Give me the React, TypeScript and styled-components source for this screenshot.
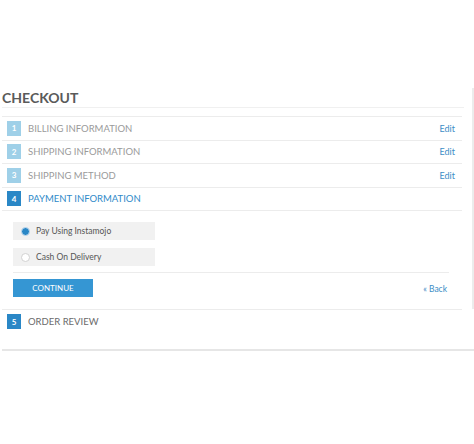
import React from "react";
import styled, { createGlobalStyle } from "styled-components";

const GlobalStyle = createGlobalStyle`
  html, body {
    margin: 0;
    padding: 0;
    background: #ffffff;
    font-family: Lato, "Open Sans", Arial, sans-serif;
  }
`;

const Page = styled.div`
  padding-top: 88px;
  padding-left: 2px;
  width: 472px;
`;

const Panel = styled.div`
  border-right: 2px solid #ececec;
  padding-right: 8px;
`;

const Title = styled.h1`
  margin: 0;
  height: 20px;
  padding-top: 1px;
  box-sizing: border-box;
  font-size: 14px;
  font-weight: 700;
  color: #5a5a5a;
  line-height: 18px;
  border-bottom: 1px solid #f0f0f0;
`;

const Steps = styled.div`
  margin-top: 8px;
  width: 460px;
`;

const StepRow = styled.div`
  display: flex;
  align-items: center;
  height: 22.5px;
  padding: 0 7px 0 5px;
  border-top: 1px solid #ececec;
`;

const Badge = styled.span<{ $active?: boolean }>`
  display: flex;
  align-items: center;
  justify-content: center;
  width: 14px;
  height: 15px;
  font-size: 8px;
  font-weight: 700;
  color: #ffffff;
  background: ${(p) => (p.$active ? "#2a87c6" : "#9fd0e8")};
`;

const StepLabel = styled.span<{ $tone?: "active" | "dark" }>`
  flex: 1;
  margin-left: 7px;
  font-size: 9.5px;
  color: ${(p) =>
    p.$tone === "active" ? "#2f8ac9" : p.$tone === "dark" ? "#6a6a6a" : "#9a9a9a"};
  text-transform: uppercase;
`;

const EditLink = styled.a`
  font-size: 9px;
  color: #3d8dc6;
  text-decoration: none;
`;

const Payment = styled.div`
  border-top: 1px solid #ececec;
  padding: 11px 0 0 11px;
`;

const Options = styled.div`
  display: flex;
  flex-direction: column;
  gap: 8px;
  padding-bottom: 6px;
  margin-right: 13px;
  border-bottom: 1px solid #ececec;
`;

const Option = styled.label`
  display: flex;
  align-items: center;
  width: 142px;
  height: 18px;
  padding-left: 8px;
  box-sizing: border-box;
  background: #f1f1f1;
  font-size: 8.5px;
  color: #555555;
`;

const Radio = styled.span<{ $checked?: boolean }>`
  box-sizing: border-box;
  width: 9px;
  height: 9px;
  border-radius: 50%;
  margin-right: 6px;
  background: ${(p) => (p.$checked ? "#2a87c6" : "#ffffff")};
  border: 1px solid ${(p) => (p.$checked ? "#c9def0" : "#d2d2d2")};
`;

const Actions = styled.div`
  display: flex;
  align-items: flex-start;
  justify-content: space-between;
  height: 36px;
  padding-top: 6px;
  box-sizing: border-box;
  margin-right: 15px;
`;

const ContinueButton = styled.button`
  width: 80px;
  height: 18px;
  border: none;
  background: #3596d3;
  color: #ffffff;
  font-family: inherit;
  font-size: 8px;
  text-transform: uppercase;
  cursor: pointer;
`;

const BackLink = styled.a`
  margin-top: 5px;
  font-size: 8.5px;
  color: #3d8dc6;
  text-decoration: none;
`;

const LastDivider = styled.div`
  width: 460px;
  border-top: 1px solid #ececec;
`;

const LastStep = styled.div`
  width: 472px;
  height: 41px;
  box-sizing: border-box;
  padding-top: 4px;
  border-bottom: 2px solid #e6e6e6;
`;

const LastRow = styled.div`
  display: flex;
  align-items: center;
  width: 460px;
  height: 15px;
  padding-left: 5px;
  box-sizing: border-box;
`;

const steps = [
  { n: 1, label: "Billing Information" },
  { n: 2, label: "Shipping Information" },
  { n: 3, label: "Shipping Method" },
];

export default function App() {
  return (
    <>
      <GlobalStyle />
      <Page>
        <Panel>
          <Title>CHECKOUT</Title>
          <Steps>
            {steps.map((s) => (
              <StepRow key={s.n}>
                <Badge>{s.n}</Badge>
                <StepLabel>{s.label}</StepLabel>
                <EditLink href="#">Edit</EditLink>
              </StepRow>
            ))}
            <StepRow>
              <Badge $active>4</Badge>
              <StepLabel $tone="active">Payment Information</StepLabel>
            </StepRow>
            <Payment>
              <Options>
                <Option>
                  <Radio $checked />
                  Pay Using Instamojo
                </Option>
                <Option>
                  <Radio />
                  Cash On Delivery
                </Option>
              </Options>
              <Actions>
                <ContinueButton>Continue</ContinueButton>
                <BackLink href="#">« Back</BackLink>
              </Actions>
            </Payment>
          </Steps>
        </Panel>
        <LastDivider />
        <LastStep>
          <LastRow>
            <Badge $active>5</Badge>
            <StepLabel $tone="dark">Order Review</StepLabel>
          </LastRow>
        </LastStep>
      </Page>
    </>
  );
}
